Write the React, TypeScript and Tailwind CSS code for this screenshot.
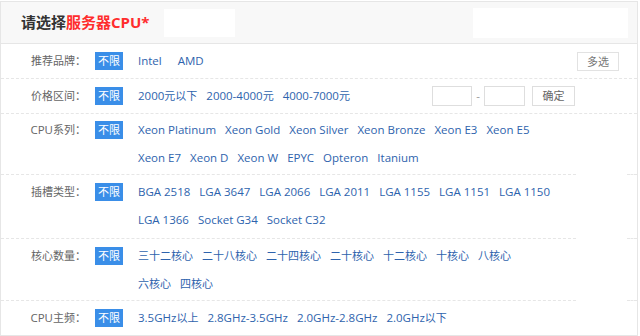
import React from 'react';

const rows: { label: string; items: string[]; pad: string; split: boolean }[] = [
  {
    label: 'CPU系列：',
    items: ['Xeon Platinum', 'Xeon Gold', 'Xeon Silver', 'Xeon Bronze', 'Xeon E3', 'Xeon E5', 'Xeon E7', 'Xeon D', 'Xeon W', 'EPYC', 'Opteron', 'Itanium'],
    pad: 'py-[2px]',
    split: true,
  },
  {
    label: '插槽类型：',
    items: ['BGA 2518', 'LGA 3647', 'LGA 2066', 'LGA 2011', 'LGA 1155', 'LGA 1151', 'LGA 1150', 'LGA 1366', 'Socket G34', 'Socket C32'],
    pad: 'pt-[3px] pb-[4px]',
    split: true,
  },
  {
    label: '核心数量：',
    items: ['三十二核心', '二十八核心', '二十四核心', '二十核心', '十二核心', '十核心', '八核心', '六核心', '四核心'],
    pad: 'pt-[3px] pb-[2px]',
    split: true,
  },
  {
    label: 'CPU主频：',
    items: ['3.5GHz以上', '2.8GHz-3.5GHz', '2.0GHz-2.8GHz', '2.0GHz以下'],
    pad: 'pt-[3px] pb-[3px]',
    split: false,
  },
];

// CJK runs are set a touch smaller than latin runs, as in the original
function Mixed({ text }: { text: string }) {
  const parts = text.split(/([\u3000-\u9fff\uff00-\uffef]+)/).filter(Boolean);
  return (
    <>
      {parts.map((p, i) =>
        /[\u3000-\u9fff\uff00-\uffef]/.test(p) ? (
          <span key={i} className="text-[11px]">{p}</span>
        ) : (
          <span key={i}>{p}</span>
        )
      )}
    </>
  );
}

function Label({ text }: { text: string }) {
  return (
    <div className="w-[87px] shrink-0 text-right text-[#666] leading-[28px] h-[28px] pr-[2px]">
      <Mixed text={text} />
    </div>
  );
}

function Badge() {
  return (
    <div className="h-[28px] flex items-center ml-[7px] mr-[15px] shrink-0">
      <span className="bg-[#3a8ee8] text-white w-[28px] h-[18px] leading-[18px] text-center text-[11px]">不限</span>
    </div>
  );
}

function Options({ items, fixed = true }: { items: string[]; fixed?: boolean }) {
  return (
    <div className={fixed ? 'w-[413px] flex flex-wrap gap-x-[9px]' : 'flex flex-wrap gap-x-[9px]'}>
      {items.map((it) => (
        <span key={it} className="leading-[28px] h-[28px] text-[#2e63ad] whitespace-nowrap">
          <Mixed text={it} />
        </span>
      ))}
    </div>
  );
}

export default function App() {
  return (
    <div
      className="w-[638px] mt-[1px] border border-[#e6e6e6] bg-white text-[11.5px]"
      style={{ fontFamily: '"Open Sans", "Noto Sans CJK SC", sans-serif' }}
    >
      {/* header */}
      <div className="h-[42px] bg-[#f8f8f8] border-b border-[#e6e6e6] flex items-center pl-[20px]">
        <div className="w-[143px] text-[15px] font-bold text-[#333] whitespace-nowrap">
          请选择<span className="text-[#ff2d2d]">服务器CPU*</span>
        </div>
        <div className="w-[71px] h-[28px] bg-white"></div>
        <div className="ml-auto mr-[9px] w-[155px] h-[30px] bg-white"></div>
      </div>

      {/* brand */}
      <div className="flex py-[3px] border-b border-dashed border-[#e6e6e6]">
        <Label text="推荐品牌：" />
        <Badge />
        <div className="flex gap-x-[16px] flex-1">
          <span className="leading-[28px] text-[#2e63ad]">Intel</span>
          <span className="leading-[28px] text-[#2e63ad]">AMD</span>
        </div>
        <div className="w-[61px] flex items-center">
          <button className="ml-[1px] w-[42px] h-[19px] border border-[#e2e2e2] bg-white text-[#777] text-[11px] leading-[17px]">多选</button>
        </div>
      </div>

      {/* price */}
      <div className="flex py-[3px] border-b border-dashed border-[#e6e6e6]">
        <Label text="价格区间：" />
        <Badge />
        <div className="flex-1 flex items-center">
          <Options items={['2000元以下', '2000-4000元', '4000-7000元']} fixed={false} />
          <div className="ml-auto flex items-center">
            <div className="w-[40px] h-[20px] border border-[#dedede] bg-white"></div>
            <span className="mx-[4px] text-[#999]">-</span>
            <div className="w-[41px] h-[20px] border border-[#dedede] bg-white"></div>
            <button className="ml-[7px] w-[43px] h-[20px] border border-[#dedede] bg-white text-[#666] text-[11px] leading-[18px]">确定</button>
          </div>
        </div>
        <div className="w-[62px]"></div>
      </div>

      {rows.map((r) => (
        <div key={r.label} className="flex">
          <div className={`flex flex-1 ${r.pad} ${r.split ? 'border-b border-dashed border-[#e6e6e6]' : ''}`}>
            <Label text={r.label} />
            <Badge />
            <Options items={r.items} />
          </div>
          <div className="w-[61px] flex flex-col justify-end items-end">
            {r.split && <div className="w-[10px] border-b border-dashed border-[#e6e6e6]"></div>}
          </div>
        </div>
      ))}
    </div>
  );
}
